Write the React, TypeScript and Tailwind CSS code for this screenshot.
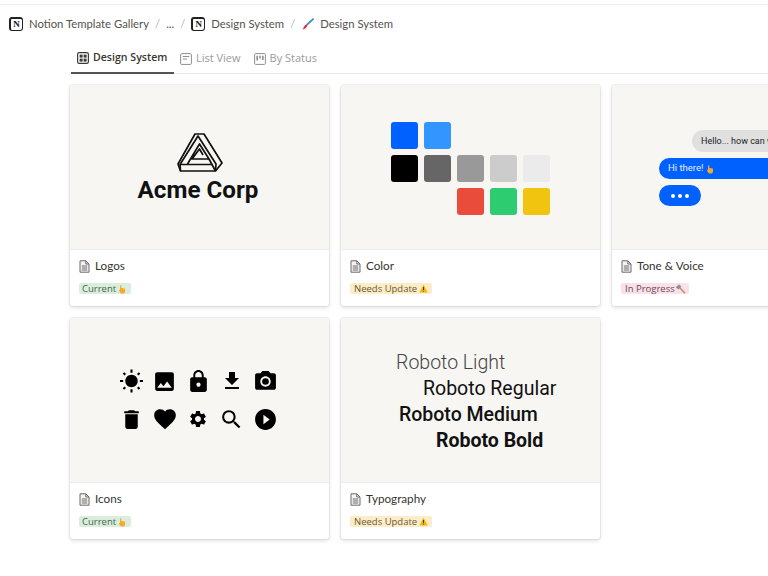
import {
  MdWbSunny, MdImage, MdLock, MdFileDownload, MdPhotoCamera,
  MdDelete, MdFavorite, MdSettings, MdSearch, MdPlayCircleFilled,
} from "react-icons/md";

const NotionMark = () => (
  <span className="w-[14px] h-[14px] shrink-0 rounded-[3px] border-[1.5px] border-[#222] border-l-[2.5px] border-t-[2.5px] bg-white flex items-center justify-center text-[9px] leading-none font-bold text-[#111] font-['Liberation_Serif',serif]">
    N
  </span>
);

const Brush = () => (
  <svg width="14" height="14" viewBox="0 0 14 14" className="shrink-0">
    <path d="M12 1 L13.2 2.2 L6.4 8.4 L5.2 7.2 Z" fill="#3b88c3" />
    <path d="M5.2 7.2 L6.4 8.4 C5.8 10.8 3.6 11.8 1.5 12.4 C3 10.5 3 8.5 5.2 7.2 Z" fill="#dd2e44" />
  </svg>
);

const Slash = () => <span className="text-[#b5b4b1] mx-[6px]">/</span>;

const PageIcon = () => (
  <svg width="11" height="13" viewBox="0 0 11 13" fill="none" stroke="#6b6a68" strokeWidth="1" className="shrink-0">
    <path d="M1 .8 H6.8 L10 4 V12.2 H1 Z" fill="#f4f3f1" />
    <path d="M6.8 .8 V4 H10" />
    <path d="M2.8 6 H8.2 M2.8 8 H8.2 M2.8 10 H8.2" />
  </svg>
);

const GridTabIcon = () => (
  <svg width="12" height="12" viewBox="0 0 12 12" fill="none" className="shrink-0">
    <rect x=".6" y=".6" width="10.8" height="10.8" rx="1.6" stroke="#3a3a38" strokeWidth="1.2" />
    <rect x="2.6" y="2.6" width="3" height="3" fill="#3a3a38" />
    <rect x="6.6" y="2.6" width="3" height="3" fill="#3a3a38" />
    <rect x="2.6" y="6.6" width="3" height="3" fill="#3a3a38" />
    <rect x="6.6" y="6.6" width="3" height="3" fill="#3a3a38" />
  </svg>
);

const ListTabIcon = () => (
  <svg width="12" height="12" viewBox="0 0 12 12" fill="none" stroke="#8f8e8b" className="shrink-0">
    <rect x=".6" y=".6" width="10.8" height="10.8" rx="1" />
    <path d="M2.8 3.5 H9.2 M2.8 6 H7" strokeWidth="1.2" />
  </svg>
);

const BoardTabIcon = () => (
  <svg width="12" height="12" viewBox="0 0 12 12" fill="none" stroke="#8f8e8b" className="shrink-0">
    <rect x=".6" y=".6" width="10.8" height="10.8" rx="1" />
    <path d="M3.2 2.8 V7.5 M6 2.8 V5.5 M8.8 2.8 V7" strokeWidth="1.6" />
  </svg>
);

const HandEmoji = () => (
  <svg width="8" height="10" viewBox="0 0 8 10" className="shrink-0">
    <path d="M2 5 V2 C2 1 3.3 1 3.3 2 V4 L6.5 4.6 C7.2 4.8 7.2 6 7 7.5 C6.8 9 5.8 9.6 4.4 9.6 C3 9.6 2 8.8 1.2 7 C.9 6 1.6 5.6 2 6 Z" fill="#f7a928" />
  </svg>
);

const WarnEmoji = () => (
  <svg width="9" height="9" viewBox="0 0 9 9" className="shrink-0">
    <path d="M4.5 .5 L8.6 8.4 H.4 Z" fill="#f2b705" />
    <path d="M4.5 3 V6 M4.5 6.8 V7.6" stroke="#4a3a10" strokeWidth="1" />
  </svg>
);

const HammerEmoji = () => (
  <svg width="11" height="10" viewBox="0 0 11 10" className="shrink-0">
    <path d="M4.5 3.5 L10 9.2" stroke="#c98a5a" strokeWidth="1.5" />
    <path d="M.8 3.2 L4 .6 L6.4 2.4 L3.4 5.4 Z" fill="#8a8f94" />
  </svg>
);

const Badge = ({ status }: { status: string }) => {
  if (status === "current") {
    return (
      <span className="inline-flex items-center gap-[2px] h-[11px] pl-[3px] pr-[5px] rounded-[2px] bg-[#dbeddb] text-[#3f6a52] text-[9.5px] leading-none">
        Current<HandEmoji />
      </span>
    );
  }
  if (status === "update") {
    return (
      <span className="inline-flex items-center h-[11px] pl-[4px] pr-[4px] gap-[2px] rounded-[2px] bg-[#fdecc8] text-[#6b5a35] text-[9.5px] leading-none">
        Needs Update<WarnEmoji />
      </span>
    );
  }
  return (
    <span className="inline-flex items-center h-[11px] pl-[4px] pr-[3px] rounded-[2px] bg-[#f8e1e8] text-[#6e4a58] text-[9.5px] leading-none">
      In Progress<HammerEmoji />
    </span>
  );
};

const Card = ({ title, status, children }: { title: string; status: string; children: React.ReactNode }) => (
  <div className="w-[259px] h-[221px] shrink-0 rounded-[3px] bg-white overflow-hidden shadow-[0_0_0_1px_rgba(15,15,15,0.06),0_2px_4px_rgba(15,15,15,0.12)]">
    <div className="h-[165px] bg-[#f7f6f3] border-b border-[#eeedeb] overflow-hidden">{children}</div>
    <div className="pl-[9px] pt-[9px]">
      <div className="flex items-center gap-[5px] h-[14px] text-[11.7px] text-[#37352f] font-['Lato',sans-serif]">
        <PageIcon />
        <span>{title}</span>
      </div>
      <div className="mt-[10px] flex">
        <Badge status={status} />
      </div>
    </div>
  </div>
);

const LogoArt = () => (
  <div className="h-full flex flex-col items-center pt-[48px]">
    <svg width="46" height="39" viewBox="0 0 46 39" fill="none" stroke="#111" strokeWidth="1.7" strokeLinejoin="round">
      <path d="M18 1 H27 L45 30 L38.5 38 H3.5 L1 31 Z" />
      <path d="M3.5 38 L3 31.5 L21 3 L39 31 L38.5 38" />
      <path d="M3 31.5 H34.5" />
      <path d="M10.5 31 L22.5 11 L32 26 H15 L22.5 16 L26 22" />
      <path d="M32 26 L38.5 38" />
    </svg>
    <div className="mt-[4px] mr-[3px] text-[24.2px] leading-[28px] font-bold text-[#111] font-['Roboto',sans-serif]">Acme Corp</div>
  </div>
);

const ColorArt = () => {
  const rows = [
    ["#0061ff", "#3395ff", "", "", ""],
    ["#000000", "#666666", "#999999", "#cccccc", "#ebebeb"],
    ["", "", "#ea4c3b", "#2ecc71", "#f1c40f"],
  ];
  return (
    <div className="pt-[37px] pl-[50px] flex flex-col gap-[6px]">
      {rows.map((row, i) => (
        <div key={i} className="flex gap-[6px]">
          {row.map((c, j) => (
            <div key={j} className="w-[27px] h-[27px] rounded-[3px]" style={{ backgroundColor: c || "transparent" }} />
          ))}
        </div>
      ))}
    </div>
  );
};

const ToneArt = () => (
  <div className="pt-[45px] pl-[47px] w-[300px] flex flex-col items-start">
    <div className="ml-[33px] w-[200px] h-[22px] rounded-full bg-[#e0e0e0] pl-[9px] text-[9px] leading-[22px] text-[#222] font-['Roboto',sans-serif] whitespace-nowrap">
      Hello... how can w
    </div>
    <div className="mt-[6px] w-[240px] h-[21px] rounded-full bg-[#0061ff] pl-[9px] flex items-center gap-[3px] text-[9.5px] text-[#e4eeff] font-['Roboto',sans-serif]">
      Hi there!<HandEmoji />
    </div>
    <div className="mt-[6px] w-[42px] h-[21px] rounded-full bg-[#0061ff] flex items-center justify-center gap-[3px]">
      <span className="w-[4px] h-[4px] rounded-full bg-white" />
      <span className="w-[4px] h-[4px] rounded-full bg-white" />
      <span className="w-[4px] h-[4px] rounded-full bg-white" />
    </div>
  </div>
);

const IconsArt = () => {
  const icons = [
    { Icon: MdWbSunny, size: 25 },
    { Icon: MdImage, size: 25 },
    { Icon: MdLock, size: 25 },
    { Icon: MdFileDownload, size: 24 },
    { Icon: MdPhotoCamera, size: 25 },
    { Icon: MdDelete, size: 25 },
    { Icon: MdFavorite, size: 26 },
    { Icon: MdSettings, size: 20 },
    { Icon: MdSearch, size: 25 },
    { Icon: MdPlayCircleFilled, size: 25 },
  ];
  return (
    <div className="pt-[50px] pl-[48px] grid grid-cols-[repeat(5,26px)] auto-rows-[26px] gap-x-[7.5px] gap-y-[12px]">
      {icons.map(({ Icon, size }, i) => (
        <div key={i} className="flex items-center justify-center text-black">
          <Icon size={size} />
        </div>
      ))}
    </div>
  );
};

const TypeArt = () => (
  <div className="pt-[32px] flex flex-col text-[#111] text-[19.5px] leading-[26px] font-['Roboto',sans-serif] whitespace-nowrap">
    <div className="pl-[55px] font-light text-[#444]">Roboto Light</div>
    <div className="pl-[82px]">Roboto Regular</div>
    <div className="pl-[58px] font-medium">Roboto Medium</div>
    <div className="pl-[95px] font-bold">Roboto Bold</div>
  </div>
);

export default function App() {
  return (
    <div className="w-[768px] h-[576px] overflow-hidden bg-white font-['Open_Sans',sans-serif]">
      <div className="h-[5px] border-b border-[#f0f0ef]" />
      <div className="h-[38px] pl-[9px] flex items-center text-[11.3px] text-[#55534e] whitespace-nowrap font-['Lato',sans-serif]">
        <NotionMark />
        <span className="ml-[6px]">Notion Template Gallery</span>
        <Slash />
        <span>...</span>
        <Slash />
        <NotionMark />
        <span className="ml-[6px]">Design System</span>
        <Slash />
        <Brush />
        <span className="ml-[5px]">Design System</span>
      </div>
      <div className="ml-[71px] h-[31px] pt-[1px] flex border-b border-[#e9e9e7] text-[11px] whitespace-nowrap">
        <div className="w-[103px] -mb-px pl-[6px] h-[30px] flex items-center gap-[4px] border-b-2 border-[#555] text-[#37352f] text-[10.6px] font-semibold">
          <GridTabIcon />
          Design System
        </div>
        <div className="ml-[6px] flex items-center gap-[4px] text-[#9b9a97]">
          <ListTabIcon />
          List View
        </div>
        <div className="ml-[13px] flex items-center gap-[4px] text-[#9b9a97]">
          <BoardTabIcon />
          By Status
        </div>
      </div>
      <div className="ml-[70px] mt-[11px] grid grid-cols-[repeat(3,260px)] gap-x-[11px] gap-y-[12px]">
        <Card title="Logos" status="current"><LogoArt /></Card>
        <Card title="Color" status="update"><ColorArt /></Card>
        <Card title="Tone & Voice" status="progress"><ToneArt /></Card>
        <Card title="Icons" status="current"><IconsArt /></Card>
        <Card title="Typography" status="update"><TypeArt /></Card>
      </div>
    </div>
  );
}
